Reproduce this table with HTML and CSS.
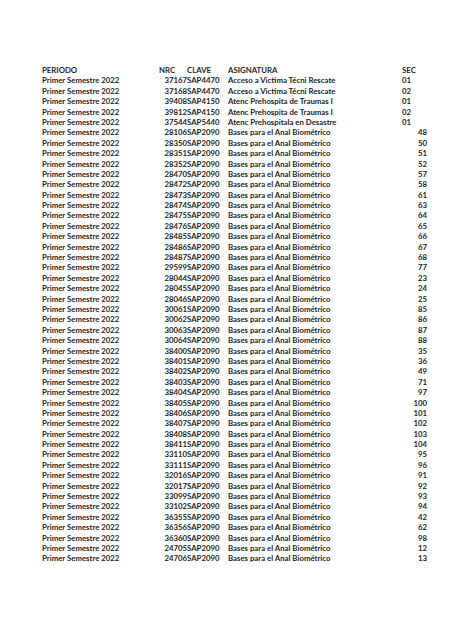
FILE: index.html
```html
<!DOCTYPE html>
<html lang="es">
<head>
<meta charset="utf-8">
<title>Listado</title>
<link rel="stylesheet" href="styles.css">
</head>
<body>
<div class="sheet">
  <div class="row head"><span>PERIODO</span><span>NRC</span><span>CLAVE</span><span>ASIGNATURA</span><span>SEC</span></div>
  <div class="row"><span>Primer Semestre 2022</span><span class="n">37167</span><span>SAP4470</span><span>Acceso a Victima Técni Rescate</span><span>01</span></div>
  <div class="row"><span>Primer Semestre 2022</span><span class="n">37168</span><span>SAP4470</span><span>Acceso a Victima Técni Rescate</span><span>02</span></div>
  <div class="row"><span>Primer Semestre 2022</span><span class="n">39408</span><span>SAP4150</span><span>Atenc Prehospita de Traumas I</span><span>01</span></div>
  <div class="row"><span>Primer Semestre 2022</span><span class="n">39812</span><span>SAP4150</span><span>Atenc Prehospita de Traumas I</span><span>02</span></div>
  <div class="row"><span>Primer Semestre 2022</span><span class="n">37544</span><span>SAP5440</span><span>Atenc Prehospitala en Desastre</span><span>01</span></div>
  <div class="row"><span>Primer Semestre 2022</span><span class="n">28106</span><span>SAP2090</span><span>Bases para el Anal Biométrico</span><span class="n">48</span></div>
  <div class="row"><span>Primer Semestre 2022</span><span class="n">28350</span><span>SAP2090</span><span>Bases para el Anal Biométrico</span><span class="n">50</span></div>
  <div class="row"><span>Primer Semestre 2022</span><span class="n">28351</span><span>SAP2090</span><span>Bases para el Anal Biométrico</span><span class="n">51</span></div>
  <div class="row"><span>Primer Semestre 2022</span><span class="n">28352</span><span>SAP2090</span><span>Bases para el Anal Biométrico</span><span class="n">52</span></div>
  <div class="row"><span>Primer Semestre 2022</span><span class="n">28470</span><span>SAP2090</span><span>Bases para el Anal Biométrico</span><span class="n">57</span></div>
  <div class="row"><span>Primer Semestre 2022</span><span class="n">28472</span><span>SAP2090</span><span>Bases para el Anal Biométrico</span><span class="n">58</span></div>
  <div class="row"><span>Primer Semestre 2022</span><span class="n">28473</span><span>SAP2090</span><span>Bases para el Anal Biométrico</span><span class="n">61</span></div>
  <div class="row"><span>Primer Semestre 2022</span><span class="n">28474</span><span>SAP2090</span><span>Bases para el Anal Biométrico</span><span class="n">63</span></div>
  <div class="row"><span>Primer Semestre 2022</span><span class="n">28475</span><span>SAP2090</span><span>Bases para el Anal Biométrico</span><span class="n">64</span></div>
  <div class="row"><span>Primer Semestre 2022</span><span class="n">28476</span><span>SAP2090</span><span>Bases para el Anal Biométrico</span><span class="n">65</span></div>
  <div class="row"><span>Primer Semestre 2022</span><span class="n">28485</span><span>SAP2090</span><span>Bases para el Anal Biométrico</span><span class="n">66</span></div>
  <div class="row"><span>Primer Semestre 2022</span><span class="n">28486</span><span>SAP2090</span><span>Bases para el Anal Biométrico</span><span class="n">67</span></div>
  <div class="row"><span>Primer Semestre 2022</span><span class="n">28487</span><span>SAP2090</span><span>Bases para el Anal Biométrico</span><span class="n">68</span></div>
  <div class="row"><span>Primer Semestre 2022</span><span class="n">29599</span><span>SAP2090</span><span>Bases para el Anal Biométrico</span><span class="n">77</span></div>
  <div class="row"><span>Primer Semestre 2022</span><span class="n">28044</span><span>SAP2090</span><span>Bases para el Anal Biométrico</span><span class="n">23</span></div>
  <div class="row"><span>Primer Semestre 2022</span><span class="n">28045</span><span>SAP2090</span><span>Bases para el Anal Biométrico</span><span class="n">24</span></div>
  <div class="row"><span>Primer Semestre 2022</span><span class="n">28046</span><span>SAP2090</span><span>Bases para el Anal Biométrico</span><span class="n">25</span></div>
  <div class="row"><span>Primer Semestre 2022</span><span class="n">30061</span><span>SAP2090</span><span>Bases para el Anal Biométrico</span><span class="n">85</span></div>
  <div class="row"><span>Primer Semestre 2022</span><span class="n">30062</span><span>SAP2090</span><span>Bases para el Anal Biométrico</span><span class="n">86</span></div>
  <div class="row"><span>Primer Semestre 2022</span><span class="n">30063</span><span>SAP2090</span><span>Bases para el Anal Biométrico</span><span class="n">87</span></div>
  <div class="row"><span>Primer Semestre 2022</span><span class="n">30064</span><span>SAP2090</span><span>Bases para el Anal Biométrico</span><span class="n">88</span></div>
  <div class="row"><span>Primer Semestre 2022</span><span class="n">38400</span><span>SAP2090</span><span>Bases para el Anal Biométrico</span><span class="n">35</span></div>
  <div class="row"><span>Primer Semestre 2022</span><span class="n">38401</span><span>SAP2090</span><span>Bases para el Anal Biométrico</span><span class="n">36</span></div>
  <div class="row"><span>Primer Semestre 2022</span><span class="n">38402</span><span>SAP2090</span><span>Bases para el Anal Biométrico</span><span class="n">49</span></div>
  <div class="row"><span>Primer Semestre 2022</span><span class="n">38403</span><span>SAP2090</span><span>Bases para el Anal Biométrico</span><span class="n">71</span></div>
  <div class="row"><span>Primer Semestre 2022</span><span class="n">38404</span><span>SAP2090</span><span>Bases para el Anal Biométrico</span><span class="n">97</span></div>
  <div class="row"><span>Primer Semestre 2022</span><span class="n">38405</span><span>SAP2090</span><span>Bases para el Anal Biométrico</span><span class="n">100</span></div>
  <div class="row"><span>Primer Semestre 2022</span><span class="n">38406</span><span>SAP2090</span><span>Bases para el Anal Biométrico</span><span class="n">101</span></div>
  <div class="row"><span>Primer Semestre 2022</span><span class="n">38407</span><span>SAP2090</span><span>Bases para el Anal Biométrico</span><span class="n">102</span></div>
  <div class="row"><span>Primer Semestre 2022</span><span class="n">38408</span><span>SAP2090</span><span>Bases para el Anal Biométrico</span><span class="n">103</span></div>
  <div class="row"><span>Primer Semestre 2022</span><span class="n">38411</span><span>SAP2090</span><span>Bases para el Anal Biométrico</span><span class="n">104</span></div>
  <div class="row"><span>Primer Semestre 2022</span><span class="n">33110</span><span>SAP2090</span><span>Bases para el Anal Biométrico</span><span class="n">95</span></div>
  <div class="row"><span>Primer Semestre 2022</span><span class="n">33111</span><span>SAP2090</span><span>Bases para el Anal Biométrico</span><span class="n">96</span></div>
  <div class="row"><span>Primer Semestre 2022</span><span class="n">32016</span><span>SAP2090</span><span>Bases para el Anal Biométrico</span><span class="n">91</span></div>
  <div class="row"><span>Primer Semestre 2022</span><span class="n">32017</span><span>SAP2090</span><span>Bases para el Anal Biométrico</span><span class="n">92</span></div>
  <div class="row"><span>Primer Semestre 2022</span><span class="n">33099</span><span>SAP2090</span><span>Bases para el Anal Biométrico</span><span class="n">93</span></div>
  <div class="row"><span>Primer Semestre 2022</span><span class="n">33102</span><span>SAP2090</span><span>Bases para el Anal Biométrico</span><span class="n">94</span></div>
  <div class="row"><span>Primer Semestre 2022</span><span class="n">36355</span><span>SAP2090</span><span>Bases para el Anal Biométrico</span><span class="n">42</span></div>
  <div class="row"><span>Primer Semestre 2022</span><span class="n">36356</span><span>SAP2090</span><span>Bases para el Anal Biométrico</span><span class="n">62</span></div>
  <div class="row"><span>Primer Semestre 2022</span><span class="n">36360</span><span>SAP2090</span><span>Bases para el Anal Biométrico</span><span class="n">98</span></div>
  <div class="row"><span>Primer Semestre 2022</span><span class="n">24705</span><span>SAP2090</span><span>Bases para el Anal Biométrico</span><span class="n">12</span></div>
  <div class="row"><span>Primer Semestre 2022</span><span class="n">24706</span><span>SAP2090</span><span>Bases para el Anal Biométrico</span><span class="n">13</span></div>
</div>
</body>
</html>
```
FILE: styles.css
```css
html, body {
  margin: 0;
  padding: 0;
  background: #ffffff;
}
.sheet {
  padding: 65px 0 0 42px;
  font-family: "Lato", "Liberation Sans", sans-serif;
  font-weight: 700;
  font-size: 7.8px;
  color: #1e1e1e;
}
.row {
  display: grid;
  grid-template-columns: 117px 28px 41px 174px 25px;
  height: 10.4px;
  line-height: 10.4px;
  white-space: nowrap;
}
.row .n {
  text-align: right;
}
```
